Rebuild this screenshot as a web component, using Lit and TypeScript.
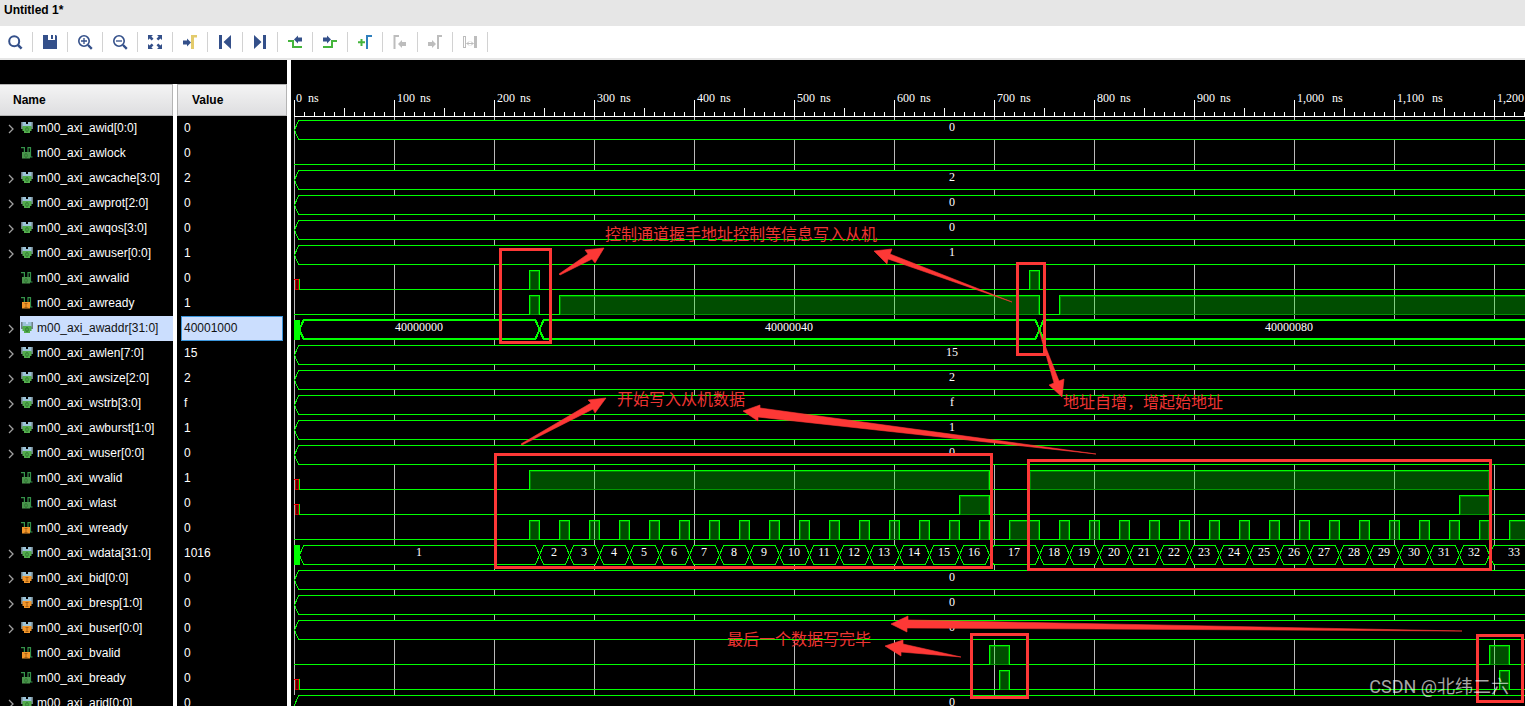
import { LitElement, html, svg, css, SVGTemplateResult } from "lit";
import { customElement, state } from "lit/decorators.js";

type Dir = "out" | "in";
interface BusSegment { from: number; to: number; text: string }
interface Signal {
  name: string;
  value: string;
  dir: Dir;
  bus: boolean;
  unknown?: boolean;
  high?: [number, number][];
  segments?: BusSegment[];
}

const END = 4000;
const ROW = 25;
const RULER_Y = 56;
const MID = 658;

const repeatPulses = (start: number, count: number): [number, number][] =>
  Array.from({ length: count }, (_, i) => [start + 30 * i, start + 30 * i + 10]);

const beats = (first: number, start: number, count: number): BusSegment[] =>
  Array.from({ length: count }, (_, i) => ({
    from: start + 30 * i, to: start + 30 * i + 30, text: String(first + i),
  }));

const bus = (name: string, value: string, dir: Dir = "out"): Signal => ({ name, value, dir, bus: true });
const bit = (
  name: string, value: string, dir: Dir, unknown = false, high: [number, number][] = [],
): Signal => ({ name, value, dir, bus: false, unknown, high });

const SIGNALS: Signal[] = [
  bus("m00_axi_awid[0:0]", "0"),
  bit("m00_axi_awlock", "0", "out"),
  bus("m00_axi_awcache[3:0]", "2"),
  bus("m00_axi_awprot[2:0]", "0"),
  bus("m00_axi_awqos[3:0]", "0"),
  bus("m00_axi_awuser[0:0]", "1"),
  bit("m00_axi_awvalid", "0", "out", true, [[235, 245], [735, 745]]),
  bit("m00_axi_awready", "1", "in", false, [[235, 245], [265, 745], [765, END]]),
  {
    ...bus("m00_axi_awaddr[31:0]", "40001000"),
    unknown: true,
    segments: [
      { from: 5, to: 245, text: "40000000" },
      { from: 245, to: 745, text: "40000040" },
      { from: 745, to: 1245, text: "40000080" },
    ],
  },
  bus("m00_axi_awlen[7:0]", "15"),
  bus("m00_axi_awsize[2:0]", "2"),
  bus("m00_axi_wstrb[3:0]", "f"),
  bus("m00_axi_awburst[1:0]", "1"),
  bus("m00_axi_wuser[0:0]", "0"),
  bit("m00_axi_wvalid", "1", "out", true, [[235, 695], [735, 1195]]),
  bit("m00_axi_wlast", "0", "out", true, [[665, 695], [1165, 1195]]),
  bit("m00_axi_wready", "0", "in", false, [
    ...repeatPulses(235, 16), [715, 745], ...repeatPulses(765, 15), [1215, 1245],
  ]),
  {
    ...bus("m00_axi_wdata[31:0]", "1016"),
    unknown: true,
    segments: [
      { from: 5, to: 245, text: "1" },
      ...beats(2, 245, 15),
      { from: 695, to: 745, text: "17" },
      ...beats(18, 745, 15),
      { from: 1195, to: 1245, text: "33" },
    ],
  },
  bus("m00_axi_bid[0:0]", "0", "in"),
  bus("m00_axi_bresp[1:0]", "0", "in"),
  bus("m00_axi_buser[0:0]", "0", "in"),
  bit("m00_axi_bvalid", "0", "in", false, [[695, 715], [1195, 1215]]),
  bit("m00_axi_bready", "0", "out", true, [[705, 715], [1205, 1215]]),
  bus("m00_axi_arid[0:0]", "0"),
];

const BLUE = "#34508a";
const GREEN = "#45b53c";
const GRAY = "#bdbdbd";

const rightArrow = (x: number, y: number, fill: string) =>
  svg`<path fill=${fill} d="M${x} ${y - 2}h4v-2l4 4-4 4v-2h-4z"/>`;
const leftArrow = (x: number, y: number, fill: string) =>
  svg`<path fill=${fill} d="M${x + 8} ${y - 2}h-4v-2l-4 4 4 4v-2h4z"/>`;
const lens = (mark: string) => svg`
  <g fill="none" stroke=${BLUE} stroke-width="1.6">
    <circle cx="7" cy="7" r="5.2"/><path d=${mark} stroke-width="1.3"/>
  </g>
  <path d="M11 11l3.8 3.8" stroke=${BLUE} stroke-width="2.4"/>`;

const TOOLS: { label: string; disabled?: boolean; icon: SVGTemplateResult }[] = [
  { label: "Search", icon: svg`<circle cx="7.2" cy="7.2" r="5" fill="none" stroke=${BLUE} stroke-width="2"/>
      <path d="M10.8 10.8l3.8 3.8" stroke=${BLUE} stroke-width="2.6"/>` },
  { label: "Save Waveform Configuration", icon: svg`<path fill=${BLUE} d="M1 1h5v5h7V1h1l1 1v13H1z"/><path fill=${BLUE} d="M9 1h2v4H9z"/>` },
  { label: "Zoom In", icon: lens("M4 7h6M7 4v6") },
  { label: "Zoom Out", icon: lens("M4 7h6") },
  { label: "Zoom Fit", icon: svg`
      <path fill=${BLUE} d="M1 1h5L4.400 2.600 6.500 4.700 4.700 6.500 2.600 4.400 1 6zM15 1v5l-1.600-1.600L11.300 6.500 9.500 4.700l2.100-2.100L10 1zM1 15v-5l1.600 1.600L4.700 9.500 6.500 11.300l-2.100 2.100L6 15zM15 15h-5l1.600-1.600L9.500 11.300 11.300 9.500l2.100 2.100L15 10z"/>` },
  { label: "Go to Cursor", icon: svg`${rightArrow(1, 8.5, BLUE)}<path fill="#e3cb6c" d="M9 15V1h6v2.500h-3V15z"/>` },
  { label: "Go to Time 0", icon: svg`<path fill=${BLUE} d="M2 1h3v14H2zM14 1v14L6.500 8z"/>` },
  { label: "Go to Last Time", icon: svg`<path fill=${BLUE} d="M11 1h3v14h-3zM2 1v14l7.500-7z"/>` },
  { label: "Previous Transition", icon: svg`<path fill=${GREEN} d="M1 6h6v6h8v2H5V8H1z"/>${leftArrow(7, 5.5, BLUE)}` },
  { label: "Next Transition", icon: svg`<path fill=${GREEN} d="M1 12h8V6h6v2h-4v6H1z"/>${rightArrow(1, 5.5, BLUE)}` },
  { label: "Add Marker", icon: svg`<path fill=${GREEN} d="M3.500 5h2v2.200H8v2H5.500V12h-2V9.200H1v-2h2.500z"/><path fill="#2f7fbd" d="M9 15V1h6v2h-4v12z"/>` },
  { label: "Previous Marker", disabled: true, icon: svg`<path fill=${GRAY} d="M1.500 15V1H7v2H3.500v12z"/>${leftArrow(6, 10, GRAY)}` },
  { label: "Next Marker", disabled: true, icon: svg`${rightArrow(1, 10, GRAY)}<path fill=${GRAY} d="M10 15V1h5v2h-3v12z"/>` },
  { label: "Swap Cursors", disabled: true, icon: svg`
      <path fill="none" stroke=${GRAY} d="M1.500 2v12M3.500 2v12M1 2.500h3M1 13.500h3M4.500 9.500h7M7 7.500l-2 2 2 2M9 7.500l2 2-2 2"/>
      <path fill=${GRAY} d="M12 2h3v12h-3z"/>` },
];

const signalIcon = (s: Signal) => {
  const body = s.dir === "out" ? "#52ad4c" : "#f2962a";
  const ink = s.dir === "out" ? "#2a6e2c" : "#9a560f";
  const mark = s.dir === "out"
    ? svg`<ellipse cx="6" cy="7.500" rx="1.300" ry="2" fill="none" stroke=${ink} stroke-width=".8"/>`
    : svg`<path d="M4.500 5.500h3M6 5.500v4M4.500 9.500h3" stroke=${ink} stroke-width=".8" fill="none"/>`;
  return html`<svg class="sig" viewBox="0 0 12 12" aria-hidden="true">
    ${s.bus
      ? svg`<path fill="#6f7f86" d="M0 0h5v2h2V0h5v7H0z"/><path fill="#9cc3d8" d="M1.500 0H5v2h2V0h3.500v5h-9z"/>
            <path fill=${body} d="M1.500 4h9v5H9v2H3V9H1.500z"/>${mark}`
      : svg`<path fill="none" stroke="#35924a" stroke-width="1.200" d="M0 .6h3.400V6M7 7V.6h2.500V10h2"/>
            <path fill=${s.dir === "out" ? "#4a944c" : body} d="M1 5h8v6.500H1z"/>
            <g transform="translate(-1 1)">${mark}</g>`}
  </svg>`;
};

const RED = "#fd3836";
const FRAMES: [number, number, number, number][] = [
  [499, 248, 552, 344],
  [1016, 262, 1046, 356],
  [494, 453, 993, 569],
  [1027, 459, 1492, 571],
  [970, 633, 1029, 699],
  [1476, 634, 1524, 703],
];
/* Each arrow: tail, inner neck, wing, tip, wing, inner neck. */
const ARROWS = [
  "559,274 588,254 585,250 604,248 595,263 592,259 560,275",
  "1012,302 890,254 892,249 874,251 887,264 888,259",
  "1039,330 1059,381 1064,379 1062,397 1049,385 1054,383",
  "521,444 591,403 588,400 606,398 595,413 593,409 522,445",
  "1096,454 760,408 760,405 743,411 758,421 758,417",
  "1462,631 908,620 908,616 891,624 907,632 907,628",
  "961,657 903,644 903,640 885,646 901,656 901,652",
];
const NOTES: [number, number, string][] = [
  [605, 240, "控制通道握手地址控制等信息写入从机"],
  [617, 405, "开始写入从机数据"],
  [1063, 408, "地址自增，增起始地址"],
  [727, 645, "最后一个数据写完毕"],
];

@customElement("wave-view")
class WaveView extends LitElement {
  static styles = css`
    :host { display: block; overflow: hidden; background: #000; }
    .plot { display: block; width: 100%; height: 100%; }
    .tick { fill: #fff; }
    .grid { fill: #b9b9b9; }
    .label { fill: #fff; font: 12px "Liberation Serif", serif; }
    .mid { text-anchor: middle; }
    .trace { fill: none; stroke: #00ff00; stroke-width: 1; shape-rendering: crispEdges; }
    .cell { fill: #000; stroke: #00ff00; stroke-width: 1; shape-rendering: crispEdges; }
    .cell.bold { stroke-width: 2; }
    .solid { fill: #00ff00; }
    .level { fill: rgba(0, 255, 0, 0.3); }
    .floor { fill: #008000; }
    .inner { fill: none; stroke: rgba(0, 170, 0, 0.6); shape-rendering: crispEdges; }
    .undef { fill: #500000; stroke: #c00000; shape-rendering: crispEdges; }
    .undef-top { fill: #ff0000; }
    .frame { fill: none; stroke: #fd3836; stroke-width: 3; }
    .note { fill: #ee3432; font: 16px "Noto Sans CJK SC", sans-serif; }
  `;

  private ruler() {
    const items: SVGTemplateResult[] = [];
    for (let t = 0; t <= END; t += 10) {
      const h = t % 100 === 0 ? 16 : t % 50 === 0 ? 8 : 4;
      items.push(svg`<rect class="tick" x=${t} y=${RULER_Y - h} width="1" height=${h}/>`);
      if (t % 100 === 0) {
        const text = t.toLocaleString("en-US");
        const unitX = t + 8 + text.length * 6;
        items.push(svg`
          <rect class="grid" x=${t} y=${RULER_Y} width="1" height=${ROW * 23 + 4}/>
          <text class="label" x=${t === 0 ? 2 : t + 3} y="42">${text}</text>
          <text class="label" x=${unitX} y="42">ns</text>`);
      }
    }
    return svg`${items}<rect class="tick" x="0" y=${RULER_Y} width=${END} height="1"/>`;
  }

  private bitTrace(s: Signal, top: number) {
    const low = top + 23.5;
    const high = top + 4.5;
    let d = s.unknown ? `M5.5 ${top + 13}V${low}` : `M0 ${low}`;
    for (const [a, b] of s.high ?? []) d += `H${a + 0.5}V${high}H${b + 0.5}V${low}`;
    d += `H${END + 10}`;
    return svg`
      ${(s.high ?? []).map(([a, b]) => svg`
        <rect class="level" x=${a + 1} y=${top + 5} width=${b - a - 1} height="19"/>`)}
      ${s.unknown ? svg`
        <rect class="undef" x="1.5" y=${top + 13.5} width="3" height="10"/>
        <rect class="undef-top" x="0" y=${top + 13} width="5" height="1"/>` : ""}
      <path class="trace" d=${d}/>
      ${(s.high ?? []).map(([a, b]) => svg`
        <rect class="floor" x=${a + 1} y=${top + 23} width=${b - a - 1} height="1"/>
        <rect class="inner" x=${a + 1.5} y=${top + 5.5} width=${b - a - 2} height="18"/>`)}`;
  }

  private busTrace(s: Signal, top: number) {
    const bold = s.segments?.length === 3;
    const y0 = bold ? top + 4 : top + 4.5;
    const y1 = bold ? top + 23 : top + 23.5;
    const ym = (y0 + y1) / 2;
    const segs = s.segments ?? [{ from: 0, to: END, text: s.value }];
    return svg`
      ${s.unknown ? svg`<rect class="solid" x="0" y=${top + 4} width="6" height="20"/>` : ""}
      ${segs.map((g) => {
        const a = g.from + 0.5;
        const b = g.to + 0.5;
        const mid = s.segments ? (g.from === 5 ? 125 : (g.from + g.to) / 2) : MID;
        return svg`
          <polygon class=${bold ? "cell bold" : "cell"}
            points="${a},${ym} ${a + 4},${y0} ${b - 4},${y0} ${b},${ym} ${b - 4},${y1} ${a + 4},${y1}"/>
          <text class="label mid" x=${mid} y=${top + 15}>${g.text}</text>`;
      })}`;
  }

  render() {
    return html`<svg class="plot" role="img" aria-label="Waveform">
      <g transform="translate(3 0)">
        ${this.ruler()}
        ${SIGNALS.map((s, i) => {
          const top = RULER_Y + ROW * i;
          return s.bus ? this.busTrace(s, top) : this.bitTrace(s, top);
        })}
      </g>
      <g transform="translate(-291 -60)">
        ${NOTES.map(([x, y, t]) => svg`<text class="note" x=${x} y=${y}>${t}</text>`)}
        ${FRAMES.map(([l, t, r, b]) => svg`
          <rect class="frame" x=${l + 1.5} y=${t + 1.5} width=${r - l - 3} height=${b - t - 3}/>`)}
        ${ARROWS.map((p) => svg`<polygon fill=${RED} stroke=${RED} stroke-width=".6" points=${p}/>`)}
      </g>
    </svg>`;
  }
}

@customElement("app-root")
class AppRoot extends LitElement {
  @state() private selected = 8;

  static styles = css`
    :host {
      display: flex; flex-direction: column; position: relative;
      height: 100vh; overflow: hidden; background: #000;
      font: 12px "Liberation Sans", Arial, sans-serif; color: #000;
    }
    .title { height: 26px; line-height: 20px; padding: 0 4px; box-sizing: border-box;
      margin: 0; background: #e6e6e6; font-size: 12px; font-weight: bold; flex: none; }
    .toolbar { display: flex; align-items: center; flex: none; height: 32px;
      background: #fff; border-bottom: 2px solid #e6e6e6; }
    .tools { display: flex; margin-left: -2px; }
    .tool { display: flex; align-items: center; justify-content: center;
      width: 35px; height: 20px; padding: 0; border: 0; border-right: 1px solid #d2d2d2;
      background: none; }
    .tool svg { width: 16px; height: 16px; }
    .body { display: flex; flex: 1; min-height: 0; }
    .signals { flex: none; width: 287px; padding-top: 24px; border-right: 4px solid #fff; overflow: hidden; }
    .table { width: 100%; table-layout: fixed; border-collapse: separate; border-spacing: 0; }
    .name-col { width: 173px; }
    th { height: 32px; padding: 0; text-align: left; }
    .head { display: flex; align-items: center; height: 32px; box-sizing: border-box; padding-left: 13px;
      border: 1px solid #b4b4b4; border-width: 1px 1px 1px 0;
      background: linear-gradient(#f4f4f4, #dedee0); }
    .value-head { border-left: 1px solid #b4b4b4; padding-left: 14px; }
    td { height: 25px; padding: 0; color: #fff; }
    .value-cell { border-left: 4px solid #fff; }
    .name { display: flex; align-items: center; height: 25px; }
    .toggle { display: flex; align-items: center; justify-content: flex-end; width: 20px; height: 25px;
      padding: 0 6px 0 0; border: 0; background: none; box-sizing: border-box; flex: none; }
    .toggle svg { width: 6px; height: 10px; }
    .text { display: flex; align-items: center; flex: 1; height: 25px; gap: 4px; box-sizing: border-box;
      padding: 0 0 2px 1px; white-space: nowrap; }
    .sig { width: 12px; height: 12px; flex: none; }
    .value { height: 25px; line-height: 23px; margin: 0 4px; padding: 0 2px; border: 1px solid transparent; box-sizing: border-box; }
    .on .text { background: #cbdefe; color: #111; }
    .on .value { background: #cbdefe; border-color: #3c96dc; color: #111; }
    .wave { flex: 1; min-width: 0; }
    .mark { position: absolute; right: 16px; bottom: 6px; line-height: 26px;
      font-family: Roboto, "Noto Sans CJK SC", sans-serif; font-size: 18px;
      color: rgba(255, 255, 255, 0.66); }
  `;

  render() {
    return html`
      <h1 class="title">Untitled 1*</h1>
      <div class="toolbar" role="toolbar" aria-label="Waveform tools">
        <div class="tools">
          ${TOOLS.map((t) => html`
            <button class="tool" type="button" aria-label=${t.label} ?disabled=${t.disabled}>
              <svg viewBox="0 0 16 16" aria-hidden="true">${t.icon}</svg>
            </button>`)}
        </div>
      </div>
      <div class="body">
        <div class="signals">
          <table class="table">
            <colgroup><col class="name-col" /><col /></colgroup>
            <thead>
              <tr>
                <th scope="col"><div class="head">Name</div></th>
                <th scope="col" class="value-cell"><div class="head value-head">Value</div></th>
              </tr>
            </thead>
            <tbody>
              ${SIGNALS.map((s, i) => html`
                <tr class=${i === this.selected ? "on" : ""} @click=${() => (this.selected = i)}>
                  <td>
                    <div class="name">
                      ${s.bus
                        ? html`<button class="toggle" type="button" aria-label="Expand ${s.name}">
                            <svg viewBox="0 0 6 10" aria-hidden="true">
                              <path d="M1 1l4 4-4 4" fill="none" stroke="#a0a0a0" stroke-width="1.300"/>
                            </svg></button>`
                        : html`<span class="toggle"></span>`}
                      <span class="text">${signalIcon(s)}<span>${s.name}</span></span>
                    </div>
                  </td>
                  <td class="value-cell"><div class="value">${s.value}</div></td>
                </tr>`)}
            </tbody>
          </table>
        </div>
        <wave-view class="wave"></wave-view>
      </div>
      <span class="mark">CSDN @北纬二六</span>`;
  }
}
